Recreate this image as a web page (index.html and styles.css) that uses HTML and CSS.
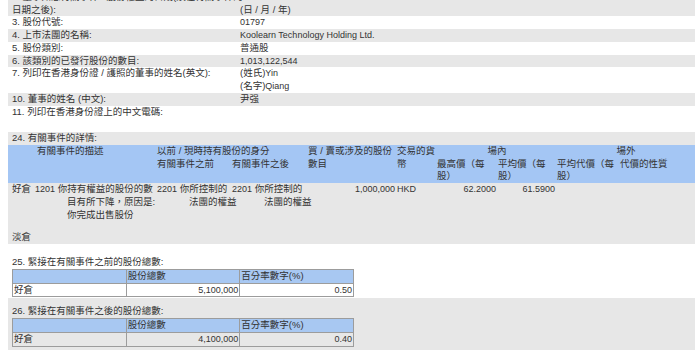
FILE: index.html
```html
<!DOCTYPE html>
<html lang="zh-Hant">
<head>
<meta charset="utf-8">
<title>董事權益披露</title>
<link rel="stylesheet" href="styles.css">
</head>
<body>
<div class="page">
  <div class="info">
    <div class="row alt">
      <div class="label">8. 董事知悉有關事件 / 股份權益的日期(須在有關事件的<br>日期之後):</div>
      <div class="value bottom">(日 / 月 / 年)</div>
    </div>
    <div class="row">
      <div class="label">3. 股份代號:</div>
      <div class="value"><span class="en">01797</span></div>
    </div>
    <div class="row alt">
      <div class="label">4. 上市法團的名稱:</div>
      <div class="value"><span class="en">Koolearn Technology Holding Ltd.</span></div>
    </div>
    <div class="row">
      <div class="label">5. 股份類別:</div>
      <div class="value">普通股</div>
    </div>
    <div class="row alt">
      <div class="label">6. 該類別的已發行股份的數目:</div>
      <div class="value"><span class="en">1,013,122,544</span></div>
    </div>
    <div class="row">
      <div class="label">7. 列印在香港身份證 / 護照的董事的姓名(英文):</div>
      <div class="value">(姓氏)<span class="en">Yin</span><br>(名字)<span class="en">Qiang</span></div>
    </div>
    <div class="row alt">
      <div class="label">10. 董事的姓名 (中文):</div>
      <div class="value">尹强</div>
    </div>
    <div class="row">
      <div class="label">11. 列印在香港身份證上的中文電碼:</div>
      <div class="value"></div>
    </div>
  </div>

  <div class="section shaded">
    <div class="section-title pad">24. 有關事件的詳情:</div>
    <table class="events">
      <colgroup>
        <col class="c-a"><col class="c-b"><col class="c-c"><col class="c-d"><col class="c-e">
        <col class="c-f"><col class="c-g"><col class="c-h"><col class="c-i"><col class="c-j">
      </colgroup>
      <thead>
        <tr>
          <th></th>
          <th class="indent2">有關事件的描述</th>
          <th colspan="2">以前 / 現時持有股份的身分</th>
          <th rowspan="2">買 / 賣或涉及的股份<br>數目</th>
          <th rowspan="2">交易的貨<br>幣</th>
          <th colspan="2" class="center">場內</th>
          <th colspan="2" class="center">場外</th>
        </tr>
        <tr>
          <th></th>
          <th></th>
          <th>有關事件之前</th>
          <th>有關事件之後</th>
          <th>最高價（每<br>股）</th>
          <th>平均價（每<br>股）</th>
          <th>平均代價（每<br>股）</th>
          <th class="indent5">代價的性質</th>
        </tr>
      </thead>
      <tbody>
        <tr class="long">
          <td class="first">好倉</td>
          <td class="coded"><span class="en">1201</span> 你持有權益的股份的數<br>目有所下降，原因是:<br>你完成出售股份</td>
          <td class="coded"><span class="en">2201</span> 你所控制的<br>法團的權益</td>
          <td class="coded"><span class="en">2201</span> 你所控制的<br>法團的權益</td>
          <td class="num"><span class="en">1,000,000</span></td>
          <td><span class="en">HKD</span></td>
          <td class="num"><span class="en">62.2000</span></td>
          <td class="num"><span class="en">61.5900</span></td>
          <td></td>
          <td></td>
        </tr>
        <tr>
          <td class="first">淡倉</td>
          <td></td><td></td><td></td><td></td><td></td><td></td><td></td><td></td><td></td>
        </tr>
      </tbody>
    </table>
  </div>

  <div class="section plain s25 pad">
    <div class="section-title">25. 緊接在有關事件之前的股份總數:</div>
    <table class="totals">
      <thead>
        <tr><th></th><th>股份總數</th><th>百分率數字(%)</th></tr>
      </thead>
      <tbody>
        <tr><td>好倉</td><td class="num"><span class="en">5,100,000</span></td><td class="num"><span class="en">0.50</span></td></tr>
      </tbody>
    </table>
  </div>

  <div class="section shaded s26 pad">
    <div class="section-title">26. 緊接在有關事件之後的股份總數:</div>
    <table class="totals">
      <thead>
        <tr><th></th><th>股份總數</th><th>百分率數字(%)</th></tr>
      </thead>
      <tbody>
        <tr><td>好倉</td><td class="num"><span class="en">4,100,000</span></td><td class="num"><span class="en">0.40</span></td></tr>
      </tbody>
    </table>
  </div>
</div>
</body>
</html>
```

FILE: styles.css
```css
* {
  box-sizing: border-box;
}

html,
body {
  margin: 0;
  padding: 0;
  background: #ffffff;
}

body {
  padding: 0 8px;
  font-family: "Liberation Sans", Arial, "Noto Sans CJK TC", sans-serif;
  font-size: 9.5px;
  line-height: 12.75px;
  color: #333333;
}

.page {
  width: 687px;
  margin-top: -9.25px;
}

.en {
  font-size: 9px;
}

/* top key/value rows */
.info {
  margin-bottom: 13.75px;
}

.row {
  display: grid;
  grid-template-columns: 228px 1fr;
  padding: 0 4px;
}

.alt {
  background: #e7e7e7;
}

.label,
.value {
  white-space: nowrap;
}

.value.bottom {
  align-self: end;
}

/* sections */
.shaded {
  background: #e7e7e7;
}

.plain {
  background: #ffffff;
}

.pad {
  padding-left: 4px;
  padding-right: 4px;
}

.section-title.pad {
  padding: 0 4px;
}

.s25 {
  padding-top: 12px;
  padding-bottom: 1px;
}

.s26 {
  padding-top: 7px;
  padding-bottom: 20px;
}

/* event details table */
table {
  border-collapse: collapse;
  border-spacing: 0;
}

.events {
  width: 687px;
  table-layout: fixed;
}

.c-a { width: 27px; }
.c-b { width: 122px; }
.c-c { width: 75px; }
.c-d { width: 76px; }
.c-e { width: 89px; }
.c-f { width: 40px; }
.c-g { width: 61px; }
.c-h { width: 59px; }
.c-i { width: 58px; }
.c-j { width: 80px; }

.events th,
.events td {
  padding: 0;
  text-align: left;
  vertical-align: top;
  font-weight: normal;
  white-space: nowrap;
}

.events th {
  background: #a4c6f4;
}

.events th.center {
  text-align: center;
}

.events th.indent2 {
  padding-left: 2px;
}

.events th.indent5 {
  padding-left: 5px;
}

.events td.first {
  padding-left: 4px;
}

.events td.coded {
  padding-left: 32px;
  text-indent: -32px;
}

.events td.num {
  text-align: right;
  padding-right: 2px;
}

.events tr.long td {
  padding-bottom: 10px;
}

.events tr.long td.first {
  padding-left: 4px;
}

/* totals tables */
.totals {
  width: 342px;
  table-layout: fixed;
  border: 1px solid #9c9c9c;
}

.totals th,
.totals td {
  border: 1px solid #9c9c9c;
  padding: 0 1px;
  text-align: left;
  font-weight: normal;
  white-space: nowrap;
}

.totals th {
  background: #a8c8f2;
}

.totals td.num {
  text-align: right;
}
```
